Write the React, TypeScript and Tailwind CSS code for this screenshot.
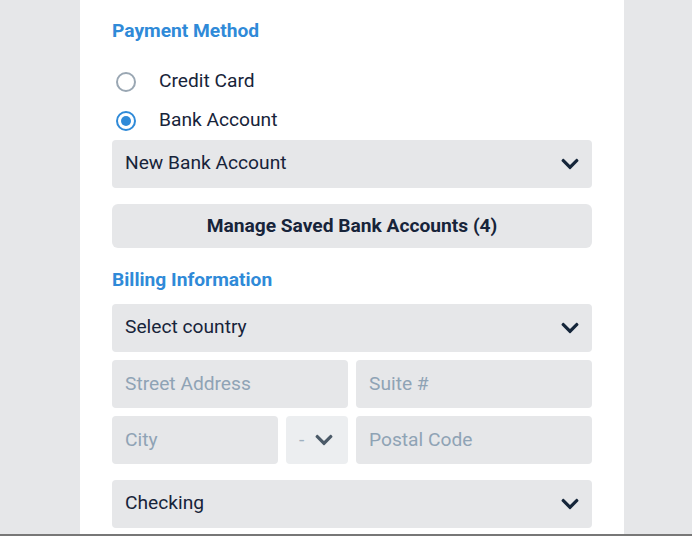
import { FaChevronDown } from "react-icons/fa";

function Select({ label, dim }: { label: string; dim?: boolean }) {
  return (
    <div className="flex h-12 items-center justify-between rounded bg-[#e6e7e9] pl-[13px] pr-[12px]">
      <span className={"-mt-[1px] " + (dim ? "text-[#8fa3b5]" : "text-[#17243a]")}>{label}</span>
      <FaChevronDown className="h-[20px] w-[20px] text-[#15263a]" />
    </div>
  );
}

function Field({ placeholder, className }: { placeholder: string; className?: string }) {
  return (
    <div className={"flex h-12 items-center rounded bg-[#e6e7e9] pl-[13px] text-[#8fa3b5] " + (className ?? "")}>
      <span>{placeholder}</span>
    </div>
  );
}

function Radio({ label, checked }: { label: string; checked?: boolean }) {
  return (
    <div className="flex h-[39px] items-center">
      <div
        className={
          "ml-[4px] flex h-5 w-5 items-center justify-center rounded-full border-2 " +
          (checked ? "border-[#2f8ad8]" : "border-[#9aa7b3]")
        }
      >
        {checked && <div className="h-[10px] w-[10px] rounded-full bg-[#2f8ad8]" />}
      </div>
      <span className="ml-[23px] text-[#17243a]">{label}</span>
    </div>
  );
}

export default function App() {
  return (
    <div
      className="flex h-[536px] flex-col overflow-hidden bg-[#e6e7e9] text-[19.2px]"
      style={{ fontFamily: "Roboto, 'Liberation Sans', sans-serif" }}
    >
      <div className="flex flex-1 overflow-hidden pl-20">
        <div className="w-[544px] bg-white px-8 pt-[19px]">
          <h2 className="h-6 leading-6 font-bold text-[#2f8ad8]">Payment Method</h2>
          <div className="mt-[19px]">
            <Radio label="Credit Card" />
            <Radio label="Bank Account" checked />
          </div>
          <div>
            <Select label="New Bank Account" />
          </div>
          <button className="mt-4 flex h-11 w-full items-center justify-center rounded-md bg-[#e6e7e9] font-bold text-[#17243a]">
            <span>Manage Saved Bank Accounts (4)</span>
          </button>
          <h2 className="mt-[20px] h-6 leading-6 font-bold text-[#2f8ad8]">Billing Information</h2>
          <div className="mt-[12px]">
            <Select label="Select country" />
          </div>
          <div className="mt-2 grid grid-cols-2 gap-2">
            <Field placeholder="Street Address" />
            <Field placeholder="Suite #" />
          </div>
          <div className="mt-2 flex gap-2">
            <Field placeholder="City" className="w-[166px]" />
            <div className="flex h-12 w-[62px] items-center rounded bg-[#eceef0] pl-[13px]">
              <span className="text-[#9fb0bf]">-</span>
              <FaChevronDown className="ml-[10px] h-[20px] w-[20px] text-[#4b5a68]" />
            </div>
            <Field placeholder="Postal Code" className="flex-1" />
          </div>
          <div className="mt-4">
            <Select label="Checking" />
          </div>
        </div>
      </div>
      <div className="h-[2px] bg-[#777777]" />
    </div>
  );
}
